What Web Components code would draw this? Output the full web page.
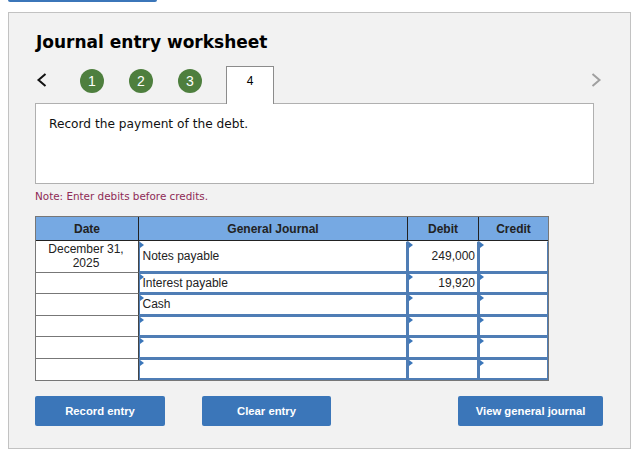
<!DOCTYPE html>
<html>
<head>
<meta charset="utf-8">
<title>Journal entry worksheet</title>
<style>
  html, body { margin: 0; padding: 0; background: #fff; }
  body { font-family: "Liberation Sans", Arial, sans-serif; }
</style>
</head>
<body>
<journal-worksheet></journal-worksheet>

<script>
class StepNav extends HTMLElement {
    constructor() {
        super();
        this.attachShadow({ mode: 'open' });
        this.shadowRoot.innerHTML = `
            <style>
                :host { display: flex; height: 38px; align-items: flex-start; position: relative; z-index: 1; }
                .arrow { width: 45px; height: 28px; display: flex; align-items: center; }
                .arrow svg { display: block; }
                .step {
                    width: 24px; height: 24px; margin-top: 3px; margin-right: 25px; border-radius: 50%;
                    background: #4e7f3e; color: #fff; font: 14px "Liberation Sans", Arial, sans-serif;
                    display: flex; align-items: center; justify-content: center;
                }
                .tab {
                    box-sizing: border-box; width: 48px; height: 38px; margin-left: 24px;
                    border: 1px solid #8c8c8c; border-bottom: 0; background: #fff; color: #000;
                    font: 12px "Liberation Sans", Arial, sans-serif; text-align: center; padding-top: 7px;
                }
                .next { margin-left: auto; margin-right: -9px; justify-content: flex-end; }
            </style>
            <div class="arrow">
                <svg width="14" height="16" viewBox="0 0 14 16"><path d="M10.5 2 L3.5 8 L10.5 14" fill="none" stroke="#111" stroke-width="2"/></svg>
            </div>
            <div class="step">1</div>
            <div class="step">2</div>
            <div class="step" style="margin-right:0">3</div>
            <div class="tab">4</div>
            <div class="arrow next">
                <svg width="14" height="16" viewBox="0 0 14 16"><path d="M3.5 2 L10.5 8 L3.5 14" fill="none" stroke="#a0a0a0" stroke-width="2"/></svg>
            </div>
        `;
    }
}
customElements.define('step-nav', StepNav);

class JournalCell extends HTMLElement {
    constructor() {
        super();
        this.attachShadow({ mode: 'open' });
        this.shadowRoot.innerHTML = `
            <style>
                :host {
                    display: flex; align-items: center; box-sizing: border-box; position: relative;
                    min-width: 0; background: #fff; color: #222;
                    font: 12px "Liberation Sans", Arial, sans-serif;
                    border: 1px solid #4f7db5; border-width: 1px 2px 2px 1px; padding: 0 2px 1px 2.5px;
                }
                :host([amount]) { justify-content: flex-end; }
                :host([last]) { border-right-width: 1px; }
                :host([first]) { border-top-color: #fff; }
                .flag {
                    position: absolute; left: 0; top: 0; width: 0; height: 0;
                    border-left: 4px solid #3b76b9;
                    border-top: 3px solid transparent; border-bottom: 3px solid transparent;
                }
            </style>
            <span class="flag"></span><slot></slot>
        `;
    }
}
customElements.define('journal-cell', JournalCell);

class JournalTable extends HTMLElement {
    constructor() {
        super();
        this.attachShadow({ mode: 'open' });
    }

    set rows(list) {
        this.render(list);
    }

    render(list) {
        const body = list.map((r, i) => {
            const first = i === 0 ? 'first' : '';
            return `
            <div class="date" style="height:${r.h}px">${r.date || ''}</div>
            <journal-cell ${first}>${r.account || ''}</journal-cell>
            <journal-cell amount ${first}>${r.debit || ''}</journal-cell>
            <journal-cell amount last ${first}>${r.credit || ''}</journal-cell>
        `;
        }).join('');
        this.shadowRoot.innerHTML = `
            <style>
                :host {
                    display: grid; box-sizing: border-box; width: 514px;
                    grid-template-columns: 103px 269px 71px 69px;
                    border: 1px solid #777; background: #fff;
                }
                .head {
                    height: 24px; box-sizing: border-box; background: #76a9e3; color: #222;
                    font: bold 12px "Liberation Sans", Arial, sans-serif;
                    display: flex; align-items: center; justify-content: center;
                    border-bottom: 1px solid #222; border-right: 1px solid #222;
                }
                .head:nth-child(5) { border-right: 0; }
                .date {
                    box-sizing: border-box; display: flex; align-items: center; justify-content: center;
                    text-align: center; color: #222; padding: 0 9px 1px 7px;
                    font: 12px/14px "Liberation Sans", Arial, sans-serif;
                    border-bottom: 1px solid #777; border-right: 1px solid #444;
                }
                .date:nth-last-child(4) { border-bottom: 0; }
            </style>
            <div class="head">Date</div>
            <div class="head">General Journal</div>
            <div class="head">Debit</div>
            <div class="head">Credit</div>
            ${body}
        `;
    }
}
customElements.define('journal-table', JournalTable);

class ActionButton extends HTMLElement {
    constructor() {
        super();
        this.attachShadow({ mode: 'open' });
        this.shadowRoot.innerHTML = `
            <style>
                :host {
                    display: flex; height: 30px; align-items: center; justify-content: center;
                    box-sizing: border-box; border-radius: 2px; background: #3b76b9; color: #fff;
                    font: bold 11.3px "Liberation Sans", Arial, sans-serif;
                }
            </style>
            <slot></slot>
        `;
    }
}
customElements.define('action-button', ActionButton);

class JournalWorksheet extends HTMLElement {
    constructor() {
        super();
        this.attachShadow({ mode: 'open' });
        this.shadowRoot.innerHTML = `
            <style>
                :host { display: block; width: 637px; height: 460px; overflow: hidden; }
                .stub { width: 149px; height: 2px; margin-left: 8px; background: #3b76b9; border-radius: 0 0 3px 3px; }
                .panel {
                    box-sizing: border-box; width: 623px; height: 437px; margin: 10px 0 0 8px;
                    padding: 17px 26px 0; background: #f2f2f2; border: 1px solid #c2c2c2;
                }
                h1 {
                    margin: 0 0 0 1px; height: 24px; color: #000;
                    font: bold 17px/24px "DejaVu Sans", Verdana, sans-serif;
                }
                step-nav { margin-top: 12px; width: 559px; }
                .prompt {
                    box-sizing: border-box; width: 559px; height: 81px; margin-top: -1px; padding: 12px 13px;
                    background: #fff; border: 1px solid #b0b0b0; color: #111;
                    font: 12.2px/16px "DejaVu Sans", Verdana, sans-serif;
                }
                .note { margin: 6px 0 0 0; height: 12px; color: #8e2a55; font: 10.4px/12px "DejaVu Sans", Verdana, sans-serif; }
                journal-table { margin-top: 14px; }
                .actions { display: flex; margin-top: 15px; width: 568px; }
                .actions action-button:nth-child(1) { width: 130px; }
                .actions action-button:nth-child(2) { width: 129px; margin-left: 37px; }
                .actions action-button:nth-child(3) { width: 145px; margin-left: auto; }
            </style>
            <div class="stub"></div>
            <div class="panel">
                <h1>Journal entry worksheet</h1>
                <step-nav></step-nav>
                <div class="prompt">Record the payment of the debt.</div>
                <div class="note">Note: Enter debits before credits.</div>
                <journal-table></journal-table>
                <div class="actions">
                    <action-button>Record entry</action-button>
                    <action-button>Clear entry</action-button>
                    <action-button>View general journal</action-button>
                </div>
            </div>
        `;
        this.shadowRoot.querySelector('journal-table').rows = [
            { h: 32, date: 'December 31, 2025', account: 'Notes payable', debit: '249,000' },
            { h: 21, account: 'Interest payable', debit: '19,920' },
            { h: 22, account: 'Cash' },
            { h: 21 },
            { h: 22 },
            { h: 21 }
        ];
    }
}
customElements.define('journal-worksheet', JournalWorksheet);
</script>
</body>
</html>
